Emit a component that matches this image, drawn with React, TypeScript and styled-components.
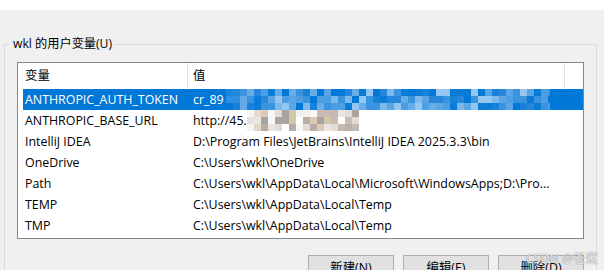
import React from 'react';
import styled, { createGlobalStyle } from 'styled-components';

const FONT = `"Open Sans", "Noto Sans CJK SC", sans-serif`;

const Global = createGlobalStyle`
  html, body { margin: 0; padding: 0; width: 604px; height: 270px; overflow: hidden; background: #f0f0f0; }
  body { font-family: ${FONT}; font-size: 12.4px; color: #000; }
  * { box-sizing: border-box; }
`;

const Window = styled.div`
  position: relative;
  width: 604px;
  height: 270px;
  overflow: hidden;
  display: flex;
  flex-direction: column;
`;

const TopStrip = styled.div`
  height: 10px;
  flex: none;
  background: #ffffff;
`;

const Panel = styled.div`
  flex: 1;
  background: #f0f0f0;
  padding: 26px 7px 0 4px;
`;

const Group = styled.fieldset`
  margin: 0;
  padding: 0;
  min-width: 0;
  height: 280px;
  border: 1px solid #dcdcdc;
`;

const Legend = styled.legend`
  margin-left: 5px;
  padding: 0 3px;
  line-height: 16px;
  font-size: 12.2px;
  color: #000;
`;

const GroupBody = styled.div`
  padding: 10px 12px 0 12px;
  display: flex;
  flex-direction: column;
`;

const ListBox = styled.div`
  height: 177px;
  background: #ffffff;
  border: 1px solid #828790;
  padding-left: 5px;
  overflow: hidden;
`;

const Row = styled.div<{ $header?: boolean; $selected?: boolean }>`
  display: grid;
  grid-template-columns: 165px 377px;
  height: ${(p) => (p.$header ? '26px' : '21px')};
  line-height: ${(p) => (p.$header ? '26px' : '21px')};
  background: ${(p) => (p.$selected ? '#0078d7' : 'transparent')};
  color: ${(p) => (p.$selected ? '#ffffff' : '#000000')};
  white-space: nowrap;
`;

const NameCell = styled.div<{ $header?: boolean }>`
  padding-left: 2px;
  overflow: hidden;
  border-right: ${(p) => (p.$header ? '1px solid #e5e5e5' : '1px solid transparent')};
`;

const ValueCell = styled.div<{ $header?: boolean }>`
  padding-left: 5px;
  overflow: hidden;
  display: flex;
  align-items: flex-start;
  border-right: ${(p) => (p.$header ? '1px solid #e5e5e5' : '1px solid transparent')};
`;

const ButtonRow = styled.div`
  display: flex;
  justify-content: flex-end;
  gap: 9px;
  margin-top: 16px;
`;

const Button = styled.button`
  width: 86px;
  height: 23px;
  padding: 0;
  background: #e1e1e1;
  border: 1px solid #adadad;
  font-family: ${FONT};
  font-size: 12.4px;
  color: #000;
`;

const Watermark = styled.div`
  position: absolute;
  right: 6px;
  top: 249px;
  font-family: ${FONT};
  font-size: 12px;
  letter-spacing: 0.3px;
  color: rgba(255, 255, 255, 0.85);
  text-shadow: 0 0 1px #8a8a8a, 0 0 1px #8a8a8a;
`;

function rng(seed: number) {
  let s = seed;
  return () => {
    s = (s * 1103515245 + 12345) & 0x7fffffff;
    return s / 0x7fffffff;
  };
}

const Mosaic: React.FC<{ width: number; height: number; palette: string[]; seed: number; fadeIn?: number; gap?: number }> = ({
  width,
  height,
  palette,
  seed,
  fadeIn = 0,
  gap = 0,
}) => {
  const r = rng(seed);
  const size = 7;
  const cols = Math.ceil(width / size);
  const rows = Math.ceil(height / size);
  const rects: React.ReactNode[] = [];
  for (let y = 0; y < rows; y++) {
    for (let x = 0; x < cols; x++) {
      const c = palette[Math.floor(r() * palette.length)];
      const op = fadeIn > 0 && x * size < fadeIn ? 0.35 + (0.65 * x * size) / fadeIn : 1;
      rects.push(<rect key={`${x}-${y}`} x={x * size} y={y * size} width={size} height={size} fill={c} opacity={op} />);
    }
  }
  return (
    <svg width={width} height={height} style={{ display: 'block', flex: 'none', marginLeft: gap }}>
      {rects}
    </svg>
  );
};

const bluePalette = ['#0078d7', '#1682da', '#3a93df', '#5aa5e5', '#7bb8eb', '#4c9de2', '#2887db', '#95c6ef', '#0a7cd8', '#67ade8'];
const grayPalette = ['#ffffff', '#f2f0ee', '#e2dcd7', '#c9bab4', '#b8aca8', '#dccab6', '#aaa4a1', '#c3bab2', '#e9e5e0', '#b6b1ac', '#d2c6ab', '#f7f7f7'];

type Item = { name: string; value: React.ReactNode; selected?: boolean };

const items: Item[] = [
  {
    name: 'ANTHROPIC_AUTH_TOKEN',
    selected: true,
    value: (
      <>
        <span>cr_89</span>
        <Mosaic width={324} height={21} palette={bluePalette} seed={7} fadeIn={20} gap={2} />
      </>
    ),
  },
  {
    name: 'ANTHROPIC_BASE_URL',
    value: (
      <>
        <span>http://45.</span>
        <Mosaic width={112} height={21} palette={grayPalette} seed={13} fadeIn={14} />
      </>
    ),
  },
  { name: 'IntelliJ IDEA', value: 'D:\\Program Files\\JetBrains\\IntelliJ IDEA 2025.3.3\\bin' },
  { name: 'OneDrive', value: 'C:\\Users\\wkl\\OneDrive' },
  { name: 'Path', value: 'C:\\Users\\wkl\\AppData\\Local\\Microsoft\\WindowsApps;D:\\Pro...' },
  { name: 'TEMP', value: 'C:\\Users\\wkl\\AppData\\Local\\Temp' },
  { name: 'TMP', value: 'C:\\Users\\wkl\\AppData\\Local\\Temp' },
];

export default function App() {
  return (
    <Window>
      <Global />
      <TopStrip />
      <Panel>
        <Group>
          <Legend>wkl 的用户变量(U)</Legend>
          <GroupBody>
            <ListBox>
              <Row $header>
                <NameCell $header>变量</NameCell>
                <ValueCell $header>值</ValueCell>
              </Row>
              {items.map((it) => (
                <Row key={it.name} $selected={it.selected}>
                  <NameCell>{it.name}</NameCell>
                  <ValueCell>{it.value}</ValueCell>
                </Row>
              ))}
            </ListBox>
            <ButtonRow>
              <Button>新建(N)</Button>
              <Button>编辑(E)</Button>
              <Button>删除(D)</Button>
            </ButtonRow>
          </GroupBody>
        </Group>
      </Panel>
      <Watermark>CSDN @苍煜</Watermark>
    </Window>
  );
}
